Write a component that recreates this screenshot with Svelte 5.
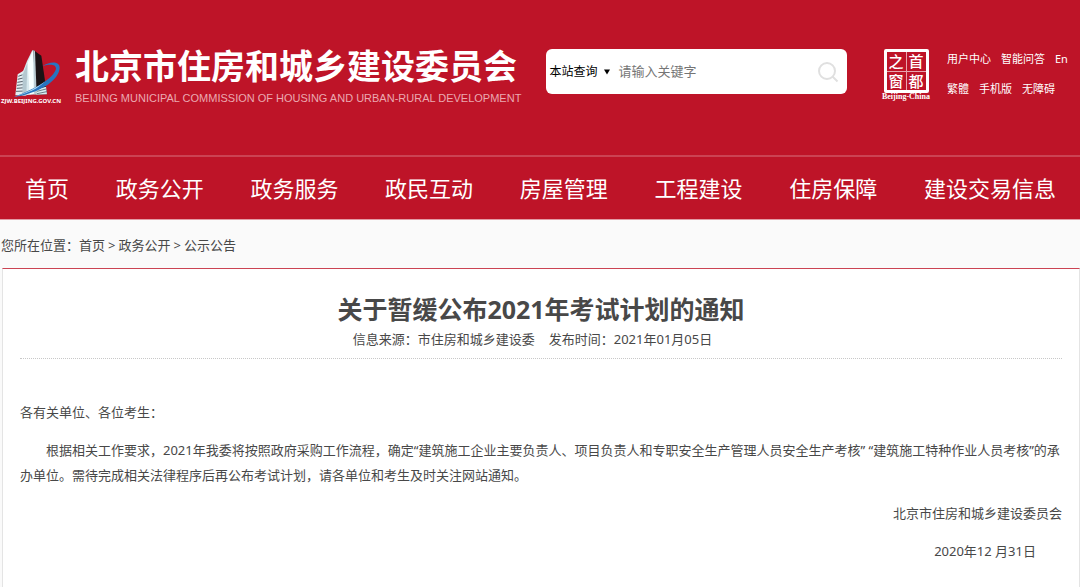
<script>
  const nav = ['首页', '政务公开', '政务服务', '政民互动', '房屋管理', '工程建设', '住房保障', '建设交易信息'];
  const tools = [
    ['用户中心', '智能问答', 'En'],
    ['繁體', '手机版', '无障碍']
  ];
  let keyword = $state('');
</script>

<div class="page" lang="zh-CN">
  <header>
    <div class="masthead">
      <a class="brand" href="#home">
        <span class="emblem">
          <svg viewBox="0 24 195 144" aria-hidden="true">
            <path d="M50 100 L76 84 L73 163 L43 163 Z" fill="#e4eef2" />
            <path d="M52 106l22-8M50 115l24-6M49 124l24-4M48 133l25-3M47 142l26-2M45 151l28-1" stroke="#56606a" stroke-width="3" />
            <path d="M64 96 L78 60 L94 28 L102 30 L106 160 L70 163 Z" fill="#d7e9ee" />
            <path d="M80 66 L96 29 L98 158 L86 160 Z" fill="#f7ffff" />
            <path d="M65 101 L79 67 L76 164 L64 164 Z" fill="#b4c8d0" />
            <path d="M97 27 L121 44 L138 160 L104 161 Z" fill="#1a1315" />
            <path d="M97 27 L102 31 L107 161 L100 160 Z" fill="#b9cbd2" />
            <path d="M106 145 L135 137 L138 160 L106 161 Z" fill="#d8eef4" />
            <path d="M108 151l27-7M108 158l29-6" stroke="#34434e" stroke-width="2" />
            <path d="M125 75 C146 61 176 59 176 80 C174 116 124 149 61 164 L37 169 C82 151 149 122 164 87 C169 70 149 68 125 75 Z" fill="#2874bf" />
            <path d="M38 168 C80 154 113 137 134 119 C112 143 80 156 38 168 Z" fill="#b9e3f8" />
          </svg>
          <span class="domain">ZJW.BEIJING.GOV.CN</span>
        </span>
        <span class="names">
          <strong>北京市住房和城乡建设委员会</strong>
          <small>BEIJING MUNICIPAL COMMISSION OF HOUSING AND URBAN-RURAL DEVELOPMENT</small>
        </span>
      </a>

      <form class="search" onsubmit={(e) => e.preventDefault()}>
        <span class="scope">
          <select aria-label="查询范围">
            <option>本站查询</option>
          </select>
          <svg viewBox="0 0 7 6" aria-hidden="true"><path d="M0 0h7L3.5 6z" /></svg>
        </span>
        <input type="text" aria-label="关键字" placeholder="请输入关键字" bind:value={keyword} />
        <button type="submit" aria-label="搜索">
          <svg viewBox="0 0 22 22" fill="none" stroke="#e0e0e0" stroke-width="2" aria-hidden="true">
            <circle cx="10" cy="10" r="8" />
            <path d="M15.500 15.500L20.500 20.500" />
          </svg>
        </button>
      </form>

      <a class="capital" href="#capital">
        <span class="seal"><b>之</b><b>首</b><b>窗</b><b>都</b></span>
        <span class="seal-name">Beijing-China</span>
      </a>

      <div class="tools">
        {#each tools as row}
          <div>
            {#each row as item}<a href="#tool">{item}</a>{/each}
          </div>
        {/each}
      </div>
    </div>
    <nav>
      {#each nav as item}<a href="#nav">{item}</a>{/each}
    </nav>
  </header>

  <div class="crumbs">
    <span>您所在位置：</span><a href="#home">首页</a><i>&gt;</i><a href="#open">政务公开</a><i>&gt;</i><a href="#notice">公示公告</a>
  </div>

  <article>
    <h1>关于暂缓公布2021年考试计划的通知</h1>
    <div class="meta">
      <span>信息来源：市住房和城乡建设委</span>
      <span>发布时间：2021年01月05日</span>
    </div>
    <div class="content">
      <p>各有关单位、各位考生：</p>
      <p class="indent">根据相关工作要求，2021年我委将按照政府采购工作流程，确定“建筑施工企业主要负责人、项目负责人和专职安全生产管理人员安全生产考核” “建筑施工特种作业人员考核”的承办单位。需待完成相关法律程序后再公布考试计划，请各单位和考生及时关注网站通知。</p>
      <p class="signed">北京市住房和城乡建设委员会</p>
      <p class="signed date">2020年12 月31日</p>
    </div>
  </article>
</div>

<style>
  :global(body) {
    margin: 0;
    background: #fafafa;
  }
  .page {
    display: flex;
    flex-direction: column;
    min-height: 100vh;
    font: 13px/25px "Noto Sans", "Noto Sans CJK SC", sans-serif;
    color: #484848;
  }
  a {
    color: inherit;
    text-decoration: none;
  }
  header {
    background: #be1428;
    color: #fff;
    border-bottom: 1px solid #e29ca5;
  }
  .masthead {
    display: flex;
    align-items: flex-start;
    padding: 49px 12px 50px 1px;
    border-bottom: 2px solid #cb4353;
  }
  .brand {
    display: flex;
    gap: 9px;
    flex: none;
  }
  .emblem {
    display: flex;
    flex-direction: column;
    width: 65px;
  }
  .emblem svg {
    display: block;
    width: 65px;
    height: 48px;
  }
  .domain {
    font-size: 6px;
    font-weight: 700;
    line-height: 8px;
    white-space: nowrap;
  }
  .names {
    display: flex;
    flex-direction: column;
    gap: 8px;
  }
  .names strong {
    font-size: 34px;
    line-height: 34px;
    font-weight: 700;
    white-space: nowrap;
  }
  .names small {
    font: 11px/14px "Liberation Sans", sans-serif;
    color: #eba9b1;
    white-space: nowrap;
  }
  .search {
    display: flex;
    align-items: center;
    flex: 1;
    min-width: 0;
    height: 45px;
    box-sizing: border-box;
    margin: 0 34px 0 25px;
    padding: 0 8px 0 3px;
    border-radius: 6px;
    background: #fff;
  }
  .scope {
    display: flex;
    align-items: center;
    gap: 6px;
  }
  .scope svg {
    width: 6px;
    height: 6px;
    fill: #000;
  }
  select,
  input,
  button {
    appearance: none;
    border: 0;
    padding: 0;
    margin: 0;
    background: none;
    font: inherit;
  }
  select {
    font-size: 12px;
    color: #000;
  }
  input {
    flex: 1;
    min-width: 0;
    margin-left: 8px;
    font-size: 13px;
    outline: 0;
  }
  input::placeholder {
    color: #757575;
  }
  button svg {
    display: block;
    width: 22px;
    height: 22px;
  }
  .capital {
    display: flex;
    flex-direction: column;
    align-items: center;
    width: 50px;
    flex: none;
  }
  .seal {
    display: grid;
    grid-template-columns: 1fr 1fr;
    gap: 1px;
    width: 39px;
    height: 38px;
    border: 3px solid #fff;
    border-radius: 2px;
    background: linear-gradient(#e8a5ad, #e8a5ad) center / 1px 100% no-repeat,
      linear-gradient(#e8a5ad, #e8a5ad) center / 100% 1px no-repeat;
  }
  .seal b {
    font-size: 15px;
    font-weight: 500;
    line-height: 19px;
    text-align: center;
  }
  .seal-name {
    font: 700 8px/8px "Liberation Serif", serif;
    white-space: nowrap;
  }
  .tools {
    display: flex;
    flex-direction: column;
    gap: 10px;
    width: 121px;
    margin-left: 16px;
    flex: none;
    font-size: 11px;
    line-height: 20px;
  }
  .tools div {
    display: flex;
    gap: 10px;
    white-space: nowrap;
  }
  nav {
    display: flex;
    justify-content: space-between;
    padding: 0 24px 0 25px;
    font-size: 22px;
    line-height: 62px;
    white-space: nowrap;
  }
  .crumbs {
    display: flex;
    padding: 13px 1px 10px;
  }
  .crumbs i {
    font-style: normal;
    margin: 0 3px;
  }
  article {
    flex: 1;
    margin-left: 2px;
    padding: 23px 17px;
    border-top: 1px solid #cb4353;
    border-left: 1px solid #e4e4e4;
    border-right: 1px solid #e4e4e4;
    background: #fff;
  }
  h1 {
    margin: 0 0 1px;
    font-size: 25px;
    line-height: 34px;
    text-align: center;
  }
  .meta {
    display: flex;
    justify-content: center;
    gap: 14px;
    padding-bottom: 6px;
    margin-right: 17px;
  }
  .content {
    padding-top: 41px;
    border-top: 1px dotted #c8c8c8;
  }
  p {
    margin: 0 0 13px;
  }
  .indent {
    text-indent: 2em;
  }
  .signed {
    text-align: right;
  }
  .date {
    padding-right: 26px;
  }
</style>
